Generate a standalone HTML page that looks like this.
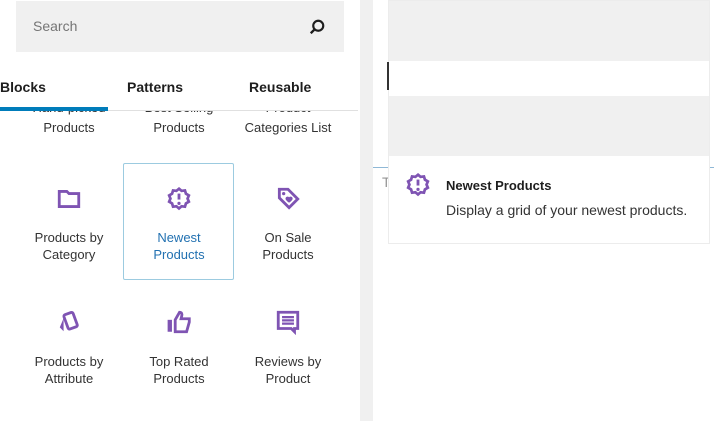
<!DOCTYPE html>
<html><head><style>
*{margin:0;padding:0;box-sizing:border-box}
body{width:714px;height:421px;overflow:hidden;background:#fff;font-family:"Liberation Sans",sans-serif;color:#1e1e1e;position:relative}
.abs{position:absolute}
.search{left:16px;top:1px;width:328px;height:51px;background:#f0f0f0}
.search span{position:absolute;left:17px;top:17px;font-size:14px;color:#757575}
.tab{top:79px;font-size:14px;font-weight:bold;color:#1e1e1e}
.lbl{font-size:13px;line-height:16.5px;text-align:center;width:110px;color:#333}
.ic{width:26px;height:26px}
</style></head><body>
<div class="abs search"><span>Search</span>
<svg class="abs" style="left:291px;top:16px" width="20" height="20" viewBox="0 0 24 24"><circle cx="13.5" cy="10.5" r="6" fill="none" stroke="#1e1e1e" stroke-width="2.6"/><path d="M9.5 14.5L4.5 19.5" stroke="#1e1e1e" stroke-width="2.8"/></svg></div>
<div class="abs tab" style="left:0">Blocks</div>
<div class="abs tab" style="left:127px">Patterns</div>
<div class="abs tab" style="left:249px">Reusable</div>
<div class="abs" style="left:0;top:110px;width:358px;height:1px;background:#e0e0e0"></div>
<div class="abs" style="left:0;top:107px;width:108px;height:4px;background:#007cba"></div>
<div class="abs" style="left:0;top:111px;width:358px;height:8px;overflow:hidden">
 <div class="abs lbl" style="left:14px;top:-11px">Hand-picked</div>
 <div class="abs lbl" style="left:124px;top:-11px">Best Selling</div>
 <div class="abs lbl" style="left:233px;top:-11px">Product</div>
</div>
<div class="abs lbl" style="left:14px;top:120px">Products</div>
<div class="abs lbl" style="left:124px;top:120px">Products</div>
<div class="abs lbl" style="left:233px;top:120px">Categories List</div>

<div class="abs" style="left:123px;top:163px;width:111px;height:117px;border:1px solid #9ccbe0;border-radius:2px"></div>
<svg class="abs ic" style="left:56px;top:186px" viewBox="0 0 24 24"><path d="M3 5h7l2 2h9v12H3z" fill="none" stroke="#7f54b3" stroke-width="2.6"/></svg>
<svg class="abs ic" style="left:166px;top:186px" viewBox="0 0 24 24"><path d="M12 2.5l2.4 2 3.1-.4.9 3 2.7 1.6-1.2 2.9 1.2 2.9-2.7 1.6-.9 3-3.1-.4-2.4 2-2.4-2-3.1.4-.9-3L2.9 14.5l1.2-2.9-1.2-2.9L5.6 7.1l.9-3 3.1.4z" fill="none" stroke="#7f54b3" stroke-width="2.5"/><path d="M12 7v5.5" stroke="#7f54b3" stroke-width="2.6"/><circle cx="12" cy="16" r="1.5" fill="#7f54b3"/></svg>
<svg class="abs ic" style="left:275px;top:186px" viewBox="0 0 24 24"><path d="M4 3h8l9 9-8 8-9-9z" fill="none" stroke="#7f54b3" stroke-width="2.6"/><circle cx="8" cy="7" r="1.5" fill="#7f54b3"/><path d="M13 10.5c1-1.3 3.3-.6 3.3 1.1 0 1.4-2.2 3-3.3 3.8-1.1-.8-3.3-2.4-3.3-3.8 0-1.7 2.3-2.4 3.3-1.1z" fill="#7f54b3"/></svg>
<div class="abs lbl" style="left:14px;top:230px">Products by<br>Category</div>
<div class="abs lbl" style="left:124px;top:230px;color:#2271b1">Newest<br>Products</div>
<div class="abs lbl" style="left:233px;top:230px">On Sale<br>Products</div>

<svg class="abs ic" style="left:56px;top:309px" viewBox="0 0 24 24"><rect x="9" y="4" width="9" height="14" rx="1.5" transform="rotate(-20 13 11)" fill="none" stroke="#7f54b3" stroke-width="2.6"/><path d="M3.5 17l3.5-8.5v12z" fill="#7f54b3"/></svg>
<svg class="abs ic" style="left:166px;top:309px" viewBox="0 0 24 24"><rect x="1.5" y="10" width="4" height="11" fill="#7f54b3"/><path d="M8.5 10l4-7c2 0 2.5 1.5 2 3.5l-.6 2.5H21.5v3l-2.5 9H8.5z" fill="none" stroke="#7f54b3" stroke-width="2.6"/></svg>
<svg class="abs ic" style="left:275px;top:309px" viewBox="0 0 24 24"><path d="M3 3h18v15h-3v3l-3-3H3z" fill="none" stroke="#7f54b3" stroke-width="2.6"/><path d="M6.5 7.5h11M6.5 10.5h11M6.5 13.5h11" stroke="#7f54b3" stroke-width="2"/></svg>
<div class="abs lbl" style="left:14px;top:354px">Products by<br>Attribute</div>
<div class="abs lbl" style="left:124px;top:354px">Top Rated<br>Products</div>
<div class="abs lbl" style="left:233px;top:354px">Reviews by<br>Product</div>

<div class="abs" style="left:360px;top:0;width:13px;height:421px;background:#f0f0f0"></div>
<div class="abs" style="left:373px;top:167px;width:341px;height:1px;background:#8fb8d6"></div>
<div class="abs" style="left:382px;top:174px;font-size:14px;color:#949494">T</div>
<div class="abs" style="left:389px;top:1px;width:320px;height:242px;background:#fff;box-shadow:0 0 0 1px #ececec">
 <div class="abs" style="left:0;top:0;width:320px;height:60px;background:#f0f0f0"></div>
 <div class="abs" style="left:0;top:95px;width:320px;height:60px;background:#f0f0f0"></div>
 <svg class="abs" style="left:16px;top:171px" width="26" height="26" viewBox="0 0 24 24"><path d="M12 2.5l2.4 2 3.1-.4.9 3 2.7 1.6-1.2 2.9 1.2 2.9-2.7 1.6-.9 3-3.1-.4-2.4 2-2.4-2-3.1.4-.9-3L2.9 14.5l1.2-2.9-1.2-2.9L5.6 7.1l.9-3 3.1.4z" fill="none" stroke="#7f54b3" stroke-width="2.5"/><path d="M12 7v5.5" stroke="#7f54b3" stroke-width="2.6"/><circle cx="12" cy="16" r="1.5" fill="#7f54b3"/></svg>
 <div class="abs" style="left:57px;top:177px;font-size:13px;font-weight:bold;white-space:nowrap">Newest Products</div>
 <div class="abs" style="left:57px;top:201px;font-size:14px;white-space:nowrap;color:#333">Display a grid of your newest products.</div>
</div>
<div class="abs" style="left:387px;top:62px;width:2px;height:28px;background:#333"></div>
</body></html>
